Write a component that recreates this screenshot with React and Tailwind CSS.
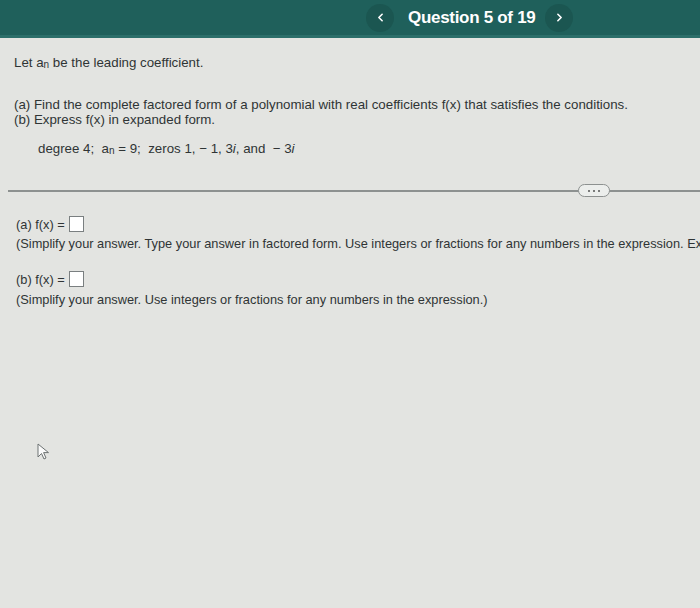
import { ChevronLeft, ChevronRight } from 'lucide-react'

function AnswerBox() {
  return <span className="inline-block w-[15px] h-[16px] border border-[#7a7f80] bg-white align-middle ml-1" />
}

function Sub({ children }) {
  return <sub className="text-[10px] relative top-[1px]">{children}</sub>
}

export default function App() {
  return (
    <div className="w-[700px] h-[608px] bg-[#e3e4e1] font-['Liberation_Sans',Arial,sans-serif] text-[#2f3435] overflow-hidden">
      {/* top bar */}
      <div className="h-[38px] bg-[#1f605b] flex items-center border-b-[3px] border-[#2c6f6a]">
        <div className="flex items-center ml-[366px]">
          <button className="w-[28px] h-[28px] rounded-full bg-[#1b5651] flex items-center justify-center text-white">
            <ChevronLeft size={13} strokeWidth={3} />
          </button>
          <span className="ml-[14px] text-white font-bold text-[17px] tracking-[-0.3px]">Question 5 of 19</span>
          <button className="ml-[10px] w-[28px] h-[28px] rounded-full bg-[#1b5651] flex items-center justify-center text-white">
            <ChevronRight size={13} strokeWidth={3} />
          </button>
        </div>
      </div>

      {/* question */}
      <div className="px-[14px] pt-[17px] text-[13.3px] leading-[15px]">
        <p>Let a<Sub>n</Sub> be the leading coefficient.</p>
        <div className="mt-[27px]">
          <p>(a) Find the complete factored form of a polynomial with real coefficients f(x) that satisfies the conditions.</p>
          <p>(b) Express f(x) in expanded form.</p>
        </div>
        <p className="mt-[14px] ml-[24px]">
          degree 4;&nbsp; a<Sub>n</Sub> = 9;&nbsp; zeros 1, − 1, 3<i>i</i>, and&nbsp; − 3<i>i</i>
        </p>
      </div>

      {/* divider */}
      <div className="relative mt-[34px] ml-[8px] h-[2px] bg-[#8d9190]">
        <div className="absolute right-[90px] -top-[6px] w-[32px] h-[13px] rounded-full border border-[#8d9190] bg-[#eceeec] flex items-center justify-center gap-[3px]">
          <span className="w-[2px] h-[2px] rounded-full bg-[#555]" />
          <span className="w-[2px] h-[2px] rounded-full bg-[#555]" />
          <span className="w-[2px] h-[2px] rounded-full bg-[#555]" />
        </div>
      </div>

      {/* answers */}
      <div className="px-[16px] pt-[24px] text-[12.8px] leading-[15px] whitespace-nowrap overflow-hidden">
        <p className="flex items-center">(a) f(x) =<AnswerBox /></p>
        <p className="mt-[4px]">(Simplify your answer. Type your answer in factored form. Use integers or fractions for any numbers in the expression. Express complex numbers in terms of i.)</p>
        <p className="mt-[20px] flex items-center">(b) f(x) =<AnswerBox /></p>
        <p className="mt-[5px]">(Simplify your answer. Use integers or fractions for any numbers in the expression.)</p>
      </div>

      {/* cursor */}
      <div className="ml-[37px] mt-[136px]">
        <svg width="14" height="18" viewBox="0 0 14 18">
          <path d="M1 1 L1 14 L4.5 10.5 L7 16 L9 15 L6.6 9.6 L11.5 9.6 Z" fill="#fafafa" stroke="#6d7272" strokeWidth="1" strokeLinejoin="round" />
        </svg>
      </div>
    </div>
  )
}
